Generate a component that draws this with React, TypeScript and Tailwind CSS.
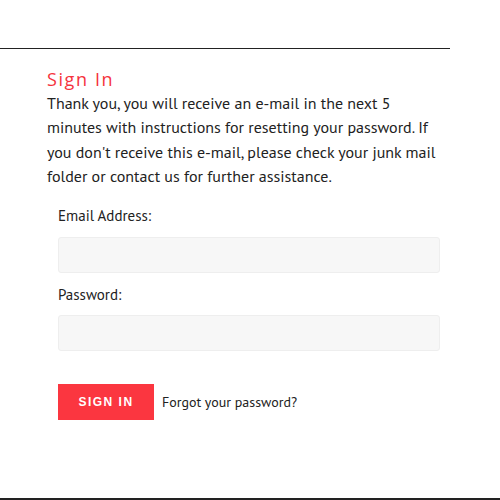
import React from 'react';

const body = { fontFamily: '"PT Sans", Lato, "Noto Sans", sans-serif' };

export default function App(): React.ReactElement {
  return (
    <div className="relative h-[500px] w-[500px] overflow-hidden bg-white text-[#222]" style={body}>
      <div className="pt-[48px]">
        <div className="h-px w-[450px] bg-[#222]" />

        <div className="px-[47px] pt-[18px]">
          <h2 className="text-[18px] leading-[24px] font-normal tracking-[1.6px] text-[#f5333d]" style={{ fontFamily: '"Open Sans", sans-serif' }}>
            Sign In
          </h2>
          <p className="w-[400px] text-[16px] leading-[24.3px] text-[#222]">
            Thank you, you will receive an e-mail in the next 5 minutes with instructions for resetting your password. If you don't receive this e-mail, please check your junk mail folder or contact us for further assistance.
          </p>

          <form className="mt-[17px] flex flex-col px-[11px]">
            <label className="text-[15px] leading-[22px]">Email Address:</label>
            <input className="mt-[10px] h-[36px] w-[382px] rounded-[3px] border border-[#eeeeee] bg-[#f7f7f7]" type="email" />
            <label className="mt-[11px] text-[15px] leading-[22px]">Password:</label>
            <input className="mt-[9px] h-[36px] w-[382px] rounded-[3px] border border-[#eeeeee] bg-[#f7f7f7]" type="password" />

            <div className="mt-[33px] flex items-center gap-[8px]">
              <button
                type="button"
                className="h-[36px] w-[96px] bg-[#fb3640] text-[12px] font-bold tracking-[1.5px] text-white"
                style={{ fontFamily: 'Arial, "Liberation Sans", sans-serif' }}
              >
                SIGN IN
              </button>
              <a className="text-[14px] text-[#222]">Forgot your password?</a>
            </div>
          </form>
        </div>
      </div>
      <div className="absolute bottom-0 left-0 h-[2px] w-full bg-[#222]" />
    </div>
  );
}
